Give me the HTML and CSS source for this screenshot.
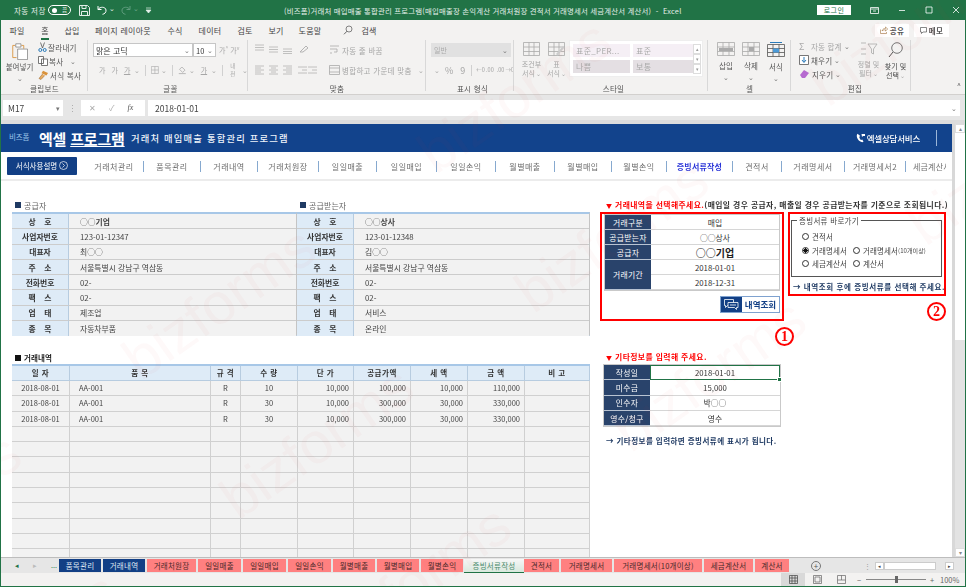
FILE: index.html
```html
<!DOCTYPE html>
<html lang="ko">
<head>
<meta charset="utf-8">
<title>엑셀 프로그램</title>
<link rel="stylesheet" href="styles.css">
</head>
<body>
<div class="app">
  <header class="titlebar">
    <div class="qa">
      <span class="qa-label">자동 저장</span>
      <span class="toggle"><i></i><b>끔</b></span>
      <svg class="qa-save" width="11" height="11" viewBox="0 0 11 11"><path d="M.5.5h8l2 2v8H.5zM3 .5v3h4v-3M2.500 10.500v-4h6v4" fill="none" stroke="#e3efe9"/></svg>
      <svg class="qa-undo" width="10" height="10" viewBox="0 0 10 10"><path d="M1 1v3.500h3.500M1.200 4.300C3 1.500 8.500 1.500 9 5c.3 2.500-1.500 4-3.500 4.300" fill="none" stroke="#fff"/></svg>
      <span class="qa-chev">⌄</span>
      <svg class="qa-redo" width="10" height="10" viewBox="0 0 10 10"><path d="M9 1v3.500H5.500M8.800 4.300C7 1.500 1.500 1.500 1 5c-.3 2.500 1.500 4 3.500 4.300" fill="none" stroke="#5f9d7e"/></svg>
      <span class="qa-chev dim">⌄</span>
      <svg class="qa-more" width="7" height="7" viewBox="0 0 7 7"><path d="M1 1h5M1 3l2.500 3L6 3z" fill="#e3efe9" stroke="#e3efe9" stroke-width=".7"/></svg>
    </div>
    <div class="doc-title">(비즈폼)거래처 매입매출 통합관리 프로그램(매입매출장 손익계산 거래처원장 견적서 거래명세서 세금계산서 계산서)&nbsp; - &nbsp;Excel</div>
    <div class="win">
      <span class="login">로그인</span>
      <svg width="9" height="7" viewBox="0 0 9 7"><path d="M.5.500h8v6h-8zM.5 2h8M3 4h3" fill="none" stroke="#fff" stroke-width=".8"/></svg>
      <svg width="8" height="8" viewBox="0 0 8 8"><path d="M1 4.500h6" stroke="#fff" stroke-width=".8"/></svg>
      <svg width="8" height="8" viewBox="0 0 8 8"><path d="M1 1h6v6H1z" fill="none" stroke="#fff" stroke-width=".8"/></svg>
      <svg width="8" height="8" viewBox="0 0 8 8"><path d="M1 1l6 6M7 1L1 7" stroke="#fff" stroke-width=".8"/></svg>
    </div>
  </header>

  <nav class="ribbon-tabs">
    <span class="rt rt-file">파일</span>
    <span class="rt rt-home">홈</span>
    <span class="rt rt-ins">삽입</span>
    <span class="rt rt-page">페이지 레이아웃</span>
    <span class="rt rt-form">수식</span>
    <span class="rt rt-data">데이터</span>
    <span class="rt rt-rev">검토</span>
    <span class="rt rt-view">보기</span>
    <span class="rt rt-help">도움말</span>
    <svg class="rt-search" width="10" height="10" viewBox="0 0 10 10"><circle cx="6" cy="4" r="3" fill="none" stroke="#666" stroke-width=".8"/><path d="M4 6.200L1 9.300" stroke="#666"/></svg>
    <span class="rt rt-find">검색</span>
    <span class="share"><svg width="8" height="8" viewBox="0 0 8 8"><path d="M.5 3.500v4h6V6M2 5c.5-2 2-2.500 3.500-2.500V1L7.700 3 5.500 5V3.800C4 3.800 3 4 2 5z" fill="none" stroke="#a0703a" stroke-width=".6"/></svg>공유</span>
    <span class="share memo"><svg width="7" height="7" viewBox="0 0 7 7"><path d="M.5.500h6v4.500H3L1.500 6.500V5h-1z" fill="none" stroke="#555" stroke-width=".7"/></svg>메모</span>
  </nav>

  <section class="ribbon">
    <div class="group g-clip">
      <div class="group-body">
        <div class="paste">
          <svg width="16" height="17" viewBox="0 0 17 21" preserveAspectRatio="none"><path d="M3.500 3H.8v15h4" fill="none" stroke="#d9923b"/><path d="M10 3h2.500v4" fill="none" stroke="#d9923b"/><path d="M4 1h5.500v4H4z" fill="#fff" stroke="#777" stroke-width=".8"/><path d="M6 7.500h10.500v13H6z" fill="#fff" stroke="#777" stroke-width=".8"/></svg>
          <span>붙여넣기</span>
          <em class="chev">⌄</em>
        </div>
        <div class="clip-list">
          <span><svg width="9" height="10" viewBox="0 0 9 10"><path d="M2.500.5l2 5.500M6.500.5l-2 5.500" stroke="#555" stroke-width=".8"/><circle cx="2.300" cy="8" r="1.500" fill="none" stroke="#2a7ab9"/><circle cx="6.700" cy="8" r="1.500" fill="none" stroke="#2a7ab9"/></svg>잘라내기</span>
          <span><svg width="10" height="10" viewBox="0 0 10 10"><path d="M.5.500h5v7h-5zM3.500 3h6v6.500h-6z" fill="#fff" stroke="#555" stroke-width=".8"/></svg>복사 <em class="chev gap">⌄</em></span>
          <span><svg width="11" height="10" viewBox="0 0 11 10"><path d="M5 .8l5 2.200-1.500 2.500-5-2.200z" fill="#d9923b"/><path d="M4.500 4L1 8.500l2 1 3.800-4" fill="#e8ad64" stroke="#8f5a20" stroke-width=".5"/></svg>서식 복사</span>
        </div>
      </div>
      <div class="group-label">클립보드</div>
    </div>

    <div class="group g-font">
      <div class="group-body stack">
        <div class="font-row">
          <span class="select sel-font">맑은 고딕<em class="chev">⌄</em></span>
          <span class="select sel-size">10<em class="chev">⌄</em></span>
          <span class="dim grow-font">가<sup>^</sup> 가<sup>v</sup></span>
        </div>
        <div class="font-row dim tools">
          <span>가</span><span>가</span><u>가</u><em class="chev">⌄</em><i class="sep"></i>
          <svg width="10" height="10" viewBox="0 0 10 10"><path d="M.5.500h9v9h-9zM5 .5v9M.5 5h9" fill="none" stroke="#aaa" stroke-width=".8"/></svg><em class="chev">⌄</em><i class="sep"></i>
          <svg width="11" height="11" viewBox="0 0 11 11"><path d="M5 1l4 4-3 3-4-4zM1 9.500h9" fill="none" stroke="#aaa"/></svg><em class="chev">⌄</em>
          <u class="gap-l">가</u><em class="chev">⌄</em><i class="sep"></i>
          <span class="tiny">내천</span><em class="chev">⌄</em>
        </div>
      </div>
      <div class="group-label">글꼴</div>
    </div>

    <div class="group g-align">
      <div class="group-body aligns">
        <div class="align-icons">
          <svg width="60" height="10" viewBox="0 0 60 10"><path d="M1 1h9M1 3.500h9M1 6h9M15 3h9M15 5.500h9M15 8h9M29 5h9M29 7.500h9M29 9.500h9" stroke="#b3b3b3" stroke-width=".8"/><path d="M46 8l6-6 2 2-5 4z" fill="none" stroke="#b3b3b3"/></svg>
          <svg width="66" height="10" viewBox="0 0 66 10"><path d="M1 1h9M1 3h6M1 5h9M1 7h6M1 9h9M15 1h9M17 3h5M15 5h9M17 7h5M15 9h9M29 1h9M32 3h6M29 5h9M32 7h6M29 9h9M44 2h9M48 5h5M44 8h9M54 2h9M58 5h5M54 8h9" stroke="#b3b3b3" stroke-width=".8"/></svg>
        </div>
        <div class="wrap-list dim">
          <span><svg width="11" height="10" viewBox="0 0 11 10"><path d="M1 1h9M1 4h7v3H5M1 8h2" fill="none" stroke="#aaa" stroke-width=".8"/></svg>자동 줄 바꿈</span>
          <span><svg width="11" height="10" viewBox="0 0 11 10"><path d="M.5.500h10v9H.5zM.5 3h10M.5 7h10" fill="none" stroke="#aaa" stroke-width=".8"/></svg>병합하고 가운데 맞춤 <em class="chev">⌄</em></span>
        </div>
      </div>
      <div class="group-label">맞춤</div>
    </div>

    <div class="group g-num">
      <div class="group-body stack">
        <span class="select sel-num">일반<em class="chev">⌄</em></span>
        <div class="num-row dim">
          <svg width="11" height="10" viewBox="0 0 11 10"><path d="M.5 1.500h10v7H.5zM4 1.500v7M7 1.500v7" fill="none" stroke="#aaa" stroke-width=".8"/></svg><em class="chev">⌄</em>
          <b>%</b><b>9</b><i class="sep"></i><span class="decs">←0 .00</span><span class="decs">.00 →0</span>
        </div>
      </div>
      <div class="group-label">표시 형식</div>
    </div>

    <div class="group g-style">
      <div class="group-body">
        <div class="ribbon-cmd dim wide">
          <svg width="17" height="14" viewBox="0 0 17 14"><path d="M.5.500h16v13H.5zM.5 5h16M.5 9.500h16M6 .5v13M11 .5v13" fill="none" stroke="#aaa" stroke-width=".8"/></svg>
          <span>조건부<br>서식<em class="chev">⌄</em></span>
        </div>
        <div class="ribbon-cmd dim wide">
          <svg width="17" height="14" viewBox="0 0 17 14"><path d="M.5.500h16v13H.5zM.5 5h16M.5 9.500h16M6 .5v13M11 .5v13" fill="none" stroke="#aaa" stroke-width=".8"/><path d="M8 12l7-8 1.500 1.500-7 8z" fill="#ccc"/></svg>
          <span>표<br>서식<em class="chev">⌄</em></span>
        </div>
        <div class="gallery">
          <div class="gallery-grid">
            <span class="sw sw-a">표준_PER...</span><span class="sw sw-a">표준</span>
            <span class="sw sw-b">나쁨</span><span class="sw sw-b">보통</span>
          </div>
          <div class="gallery-arrows"><i>▴</i><i>▾</i><i>▾</i></div>
        </div>
      </div>
      <div class="group-label">스타일</div>
    </div>

    <div class="group g-cell">
      <div class="group-body cells">
        <div class="cell-cmd">
          <svg width="18" height="14" viewBox="0 0 18 14"><path d="M.5.500h17v13H.5zM.5 5h17M.5 9.500h17M6 .5v13M12 .5v13" fill="none" stroke="#aaa" stroke-width=".8"/><path d="M2 6h14v3H2z" fill="#aaa"/></svg>
          <span>삽입</span><em class="chev">⌄</em>
        </div>
        <div class="cell-cmd">
          <svg width="18" height="14" viewBox="0 0 18 14"><path d="M.5.500h17v13H.5zM.5 5h17M.5 9.500h17M6 .5v13M12 .5v13" fill="none" stroke="#aaa" stroke-width=".8"/><path d="M7 5h5v4H7z" fill="#aaa"/></svg>
          <span>삭제</span><em class="chev">⌄</em>
        </div>
        <div class="cell-cmd">
          <svg width="18" height="15" viewBox="0 0 18 15"><path d="M.5 2.500h17v12H.5zM.5 6.500h17M.5 10.500h17M6 2.500v12M12 2.500v12" fill="none" stroke="#555" stroke-width=".8"/><path d="M6 6.500h6v4H6z" fill="#4a9ad8"/><path d="M3 .5h12" stroke="#2a7ab9"/></svg>
          <span>서식</span><em class="chev">⌄</em>
        </div>
      </div>
      <div class="group-label">셀</div>
    </div>

    <div class="group g-edit">
      <div class="group-body">
        <div class="edit-list">
          <span class="dim"><b class="sigma">Σ</b>자동 합계 <em class="chev">⌄</em></span>
          <span><svg width="10" height="10" viewBox="0 0 10 10"><path d="M.5.500h9v9h-9z" fill="#fff" stroke="#555" stroke-width=".8"/><path d="M5 2v5M3 5l2 2.500L7 5" fill="none" stroke="#2a7ab9"/></svg>채우기<em class="chev">⌄</em></span>
          <span><svg width="11" height="10" viewBox="0 0 11 10"><path d="M1 6l4-5 5 3-4 5H3z" fill="#b66ad0"/></svg>지우기<em class="chev">⌄</em></span>
        </div>
        <div class="ribbon-cmd dim filter">
          <svg width="18" height="14" viewBox="0 0 18 14"><path d="M1 1h5M1 7h5M1 12h5M8 2h9l-3.500 5v5l-2-1V7z" fill="none" stroke="#aaa" stroke-width=".8"/></svg>
          <span>정렬 및<br>필터<em class="chev">⌄</em></span>
        </div>
        <div class="ribbon-cmd filter">
          <svg width="15" height="16" viewBox="0 0 15 16"><circle cx="9" cy="6" r="5.300" fill="none" stroke="#555" stroke-width=".8"/><path d="M5 10l-4 5" stroke="#555"/></svg>
          <span class="find-tx">찾기 및<br>선택<em class="chev">⌄</em></span>
        </div>
      </div>
      <div class="group-label">편집</div>
    </div>
    <div class="collapse">^</div>
  </section>

  <section class="formula-bar">
    <div class="namebox">M17<em class="chev">▾</em></div>
    <div class="fb-dots">⋮</div>
    <div class="fb-btns"><span>✕</span><span>✓</span><i>fx</i></div>
    <div class="fb-input">2018-01-01<em class="chev">⌄</em></div>
  </section>

  <div class="sheet">
    <main class="sheet-main">
      <div class="banner">
        <span class="brand-sm">비즈폼</span>
        <span class="brand">엑셀 <u>프로그램</u></span>
        <span class="brand-sub">거래처 매입매출 통합관리 프로그램</span>
        <span class="call"><svg width="10" height="10" viewBox="0 0 10 10"><path d="M1.500.8C0 2.500 1 6 3.500 8c1.500 1.200 3 1.500 4 .8L6.300 6.500l-1.200.6C4 6.400 3.400 5 3.300 3.800L4.300 3z" fill="#fff"/><path d="M5.500 1h3.500v2H7L6 4z" fill="#fff"/></svg>엑셀상담서비스</span>
      </div>

      <div class="menu">
        <div class="help-btn">서식사용설명 <svg width="9" height="9" viewBox="0 0 9 9"><circle cx="4.500" cy="4.500" r="4" fill="none" stroke="#fff" stroke-width=".7"/><path d="M3.500 2.500l2 2-2 2" fill="none" stroke="#fff" stroke-width=".7"/></svg></div>
        <div class="menu-items">
          <span>거래처관리</span><span>품목관리</span><span>거래내역</span><span>거래처원장</span><span>일일매출</span><span>일일매입</span><span>일일손익</span><span>월별매출</span><span>월별매입</span><span>월별손익</span><span class="on">증빙서류작성</span><span>견적서</span><span>거래명세서</span><span>거래명세서2</span><span class="last">세금계산서</span>
        </div>
      </div>

      <div class="panels">
        <div class="upper">
          <div class="parties">
            <div class="party">
              <h3 class="sub-h"><i></i>공급자</h3>
              <div class="info">
                <b>상 &nbsp; &nbsp;호</b><span>○○<strong>기업</strong></span>
                <b>사업자번호</b><span>123-01-12347</span>
                <b>대표자</b><span>최○○</span>
                <b>주 &nbsp; &nbsp;소</b><span>서울특별시 강남구 역삼동</span>
                <b>전화번호</b><span>02-</span>
                <b>팩 &nbsp; &nbsp;스</b><span>02-</span>
                <b>업 &nbsp; &nbsp;태</b><span>제조업</span>
                <b>종 &nbsp; &nbsp;목</b><span>자동차부품</span>
              </div>
            </div>
            <div class="party party-b">
              <h3 class="sub-h"><i></i>공급받는자</h3>
              <div class="info">
                <b>상 &nbsp; &nbsp;호</b><span>○○<strong>상사</strong></span>
                <b>사업자번호</b><span>123-01-12348</span>
                <b>대표자</b><span>김○○</span>
                <b>주 &nbsp; &nbsp;소</b><span>서울특별시 강남구 역삼동</span>
                <b>전화번호</b><span>02-</span>
                <b>팩 &nbsp; &nbsp;스</b><span>02-</span>
                <b>업 &nbsp; &nbsp;태</b><span>서비스</span>
                <b>종 &nbsp; &nbsp;목</b><span>온라인</span>
              </div>
            </div>
          </div>

          <div class="pick">
            <p class="notice"><em><i class="tri">▼</i> 거래내역을 선택해주세요.</em>(매입일 경우 공급자, 매출일 경우 공급받는자를 기준으로 조회됩니다.)</p>
            <div class="pick-boxes">
              <div class="red-box box-a">
                <div class="form-grid">
                  <b>거래구분</b><span>매입</span>
                  <b>공급받는자</b><span>○○상사</span>
                  <b>공급자</b><span class="big">○○기업</span>
                  <b class="span2">거래기간</b><span>2018-01-01</span><span>2018-12-31</span>
                </div>
                <div class="query-wrap">
                  <div class="query">
                    <span class="query-ic"><svg width="15" height="11" viewBox="0 0 15 11"><path d="M.5.500h9v6h-6l-2 2v-2h-1z" fill="none" stroke="#fff" stroke-width=".8"/><path d="M4 3.500h10v5h-1.500v2l-2-2H4z" fill="#123f85" stroke="#fff" stroke-width=".8"/><path d="M6 6h6" stroke="#fff" stroke-width=".8"/></svg></span>
                    <span class="query-tx">내역조회</span>
                  </div>
                </div>
                <span class="num-badge badge-a">1</span>
              </div>
              <div class="red-box box-b">
                <fieldset class="docs">
                  <legend>증빙서류 바로가기</legend>
                  <div class="radios">
                    <span><i class="radio"></i>견적서</span><span></span>
                    <span><i class="radio checked"></i>거래명세서</span><span><i class="radio"></i>거래명세서<small>(10개이상)</small></span>
                    <span><i class="radio"></i>세금계산서</span><span><i class="radio"></i>계산서</span>
                  </div>
                </fieldset>
                <p class="hint box-hint">→ 내역조회 후에 증빙서류를 선택해 주세요.</p>
                <span class="num-badge badge-b">2</span>
              </div>
            </div>
          </div>
        </div>

        <div class="lower">
          <div class="ledger-wrap">
            <h3 class="sub-h dark"><i></i>거래내역</h3>
            <div class="ledger">
              <div class="lrow lhead"><b>일 자</b><b>품 목</b><b>규 격</b><b>수 량</b><b>단 가</b><b>공급가액</b><b>세 액</b><b>금 액</b><b>비 고</b></div>
              <div class="lrow"><span>2018-08-01</span><span class="l">AA-001</span><span>R</span><span>10</span><span class="r">10,000</span><span class="r">100,000</span><span class="r">10,000</span><span class="r">110,000</span><span></span></div>
              <div class="lrow"><span>2018-08-01</span><span class="l">AA-001</span><span>R</span><span>30</span><span class="r">10,000</span><span class="r">300,000</span><span class="r">30,000</span><span class="r">330,000</span><span></span></div>
              <div class="lrow"><span>2018-08-01</span><span class="l">AA-001</span><span>R</span><span>30</span><span class="r">10,000</span><span class="r">300,000</span><span class="r">30,000</span><span class="r">330,000</span><span></span></div>
              <div class="lrow"><span></span><span></span><span></span><span></span><span></span><span></span><span></span><span></span><span></span></div>
              <div class="lrow"><span></span><span></span><span></span><span></span><span></span><span></span><span></span><span></span><span></span></div>
              <div class="lrow"><span></span><span></span><span></span><span></span><span></span><span></span><span></span><span></span><span></span></div>
              <div class="lrow"><span></span><span></span><span></span><span></span><span></span><span></span><span></span><span></span><span></span></div>
              <div class="lrow"><span></span><span></span><span></span><span></span><span></span><span></span><span></span><span></span><span></span></div>
              <div class="lrow"><span></span><span></span><span></span><span></span><span></span><span></span><span></span><span></span><span></span></div>
              <div class="lrow"><span></span><span></span><span></span><span></span><span></span><span></span><span></span><span></span><span></span></div>
              <div class="lrow"><span></span><span></span><span></span><span></span><span></span><span></span><span></span><span></span><span></span></div>
              <div class="lrow"><span></span><span></span><span></span><span></span><span></span><span></span><span></span><span></span><span></span></div>
            </div>
          </div>
          <div class="etc">
            <p class="notice red-only"><em><i class="tri">▼</i> 기타정보를 입력해 주세요.</em></p>
            <div class="form-grid etc-grid">
              <b>작성일</b><span class="selected">2018-01-01</span>
              <b>미수금</b><span>15,000</span>
              <b>인수자</b><span>박○○</span>
              <b>영수/청구</b><span>영수</span>
            </div>
            <p class="hint etc-hint">→ 기타정보를 입력하면 증빙서류에 표시가 됩니다.</p>
          </div>
        </div>
      </div>
    </main>
    <aside class="vscroll">
      <span class="sb-arrow">▴</span>
      <span class="sb-thumb"></span>
      <span class="sb-track"></span>
      <span class="sb-arrow">▾</span>
    </aside>
  </div>

  <div class="tabstrip">
    <div class="tab-nav"><span>◂</span><span class="faint">▸</span><span>...</span></div>
    <span class="tab navy t42">품목관리</span>
    <span class="tab navy t42">거래내역</span>
    <span class="tab pink t50">거래처원장</span>
    <span class="tab pink t43">일일매출</span>
    <span class="tab pink t43">일일매입</span>
    <span class="tab pink t43">일일손익</span>
    <span class="tab pink t42">월별매출</span>
    <span class="tab pink t42">월별매입</span>
    <span class="tab pink t42">월별손익</span>
    <span class="tab active">증빙서류작성</span>
    <span class="tab pink t36">견적서</span>
    <span class="tab pink t52">거래명세서</span>
    <span class="tab pink t88">거래명세서(10개이상)</span>
    <span class="tab pink t50">세금계산서</span>
    <span class="tab pink t35">계산서</span>
    <span class="tab-add">+</span>
    <div class="hscroll"><span class="dots">⋮</span><span class="hs-b">◂</span><span class="hs-t"></span><span class="hs-b">▸</span></div>
  </div>

  <footer class="status">
    <span class="view on"><svg width="9" height="9" viewBox="0 0 9 9"><path d="M.5.500h8v8h-8zM.5 3h8M.5 6h8M3 .5v8M6 .5v8" fill="none" stroke="#444" stroke-width=".7"/></svg></span>
    <span class="view"><svg width="9" height="9" viewBox="0 0 9 9"><path d="M.5.500h8v8h-8zM2 2h5v5H2z" fill="none" stroke="#666" stroke-width=".7"/></svg></span>
    <span class="view"><svg width="9" height="9" viewBox="0 0 9 9"><path d="M.5.500h8v8h-8zM.5 5h8M4.500.5V5" fill="none" stroke="#666" stroke-width=".7"/></svg></span>
    <span class="zoom-minus">−</span>
    <span class="zoom-track"><i></i></span>
    <span class="zoom-plus">+</span>
    <span class="zoom-val">100%</span>
  </footer>

  <div class="watermark" aria-hidden="true">
    <div class="wm-sheet">
      <span>bizforms</span><span>bizforms</span><span>bizforms</span><span>bizforms</span><span>bizforms</span><span>bizforms</span><span>bizforms</span><span>bizforms</span><span>bizforms</span><span>bizforms</span><span>bizforms</span><span>bizforms</span>
    </div>
  </div>
</div>
</body>
</html>
```
FILE: styles.css
```css
* { box-sizing: border-box; }
html, body { margin: 0; padding: 0; width: 966px; height: 587px; overflow: hidden; }
body { font-family: "Noto Sans CJK KR", "Noto Sans", sans-serif; font-size: 8px; color: #333; background: #fff; }
em { font-style: normal; }
h3, p, fieldset { margin: 0; padding: 0; }

.app { position: relative; width: 966px; height: 587px; display: flex; flex-direction: column; border-left: 1px solid #217346; border-right: 1px solid #217346; border-bottom: 1px solid #217346; overflow: hidden; filter: blur(.3px); }

.chev { color: #777; font-size: 7px; line-height: 6px; }
.dim { color: #a6a6a6; }

/* title bar */
.titlebar { height: 20px; flex: none; background: #217346; color: #e6f0eb; display: flex; align-items: center; font-size: 7.5px; }
.qa { width: 283px; flex: none; display: flex; align-items: center; padding-left: 13px; }
.qa-label { letter-spacing: .4px; width: 34px; }
.toggle { width: 23px; height: 10px; border: 1px solid #fff; border-radius: 5px; display: flex; align-items: center; justify-content: space-between; padding: 0 3px 0 3px; font-size: 5.500px; }
.toggle i { width: 5px; height: 5px; border-radius: 50%; background: #fff; }
.toggle b { font-weight: 400; }
.qa-save { margin-left: 8px; }
.qa-undo { margin-left: 7px; }
.qa-chev { margin: -4px 0 0 2px; font-size: 7px; width: 9px; }
.qa-chev.dim { color: #6da88b; }
.qa-redo { margin-left: 3px; }
.qa-more { margin-left: 3px; }
.doc-title { width: 400px; flex: none; font-size: 7.4px; white-space: nowrap; overflow: hidden; letter-spacing: .2px; }
.win { flex: 1; display: flex; align-items: center; justify-content: flex-start; padding-left: 133px; gap: 19px; }
.login { background: #fff; color: #217346; width: 34px; height: 10px; line-height: 10px; text-align: center; font-size: 7px; letter-spacing: .4px; }

/* ribbon tabs */
.ribbon-tabs { height: 18px; flex: none; background: #f3f2f1; display: flex; align-items: center; padding-top: 2px; font-size: 8px; color: #444; letter-spacing: .25px; }
.rt { flex: none; text-align: center; }
.rt-file { width: 30px; margin-left: 1px; }
.rt-home { width: 26px; position: relative; }
.rt-home::after { content: ""; position: absolute; left: 9px; right: 9px; bottom: -4px; height: 1.500px; background: #217346; }
.rt-ins { width: 28px; }
.rt-page { width: 74px; }
.rt-form { width: 30px; }
.rt-data { width: 40px; }
.rt-rev { width: 30px; }
.rt-view { width: 32px; }
.rt-help { width: 36px; }
.rt-search { margin-left: 15px; flex: none; }
.rt-find { width: 30px; margin-left: 1px; }
.share { flex: none; margin-left: 491px; width: 34px; height: 13px; background: #fff; display: flex; align-items: center; justify-content: center; gap: 2px; font-size: 7.500px; font-weight: 700; color: #555; letter-spacing: .4px; }
.share.memo { margin-left: 5px; width: 35px; }

/* ribbon */
.ribbon { height: 57px; flex: none; background: #f3f2f1; display: flex; border-bottom: 1px solid #d2d0ce; font-size: 7.500px; color: #555; }
.group { flex: none; display: flex; flex-direction: column; position: relative; }
.group::after { content: ""; position: absolute; right: 0; top: 2px; bottom: 3px; width: 1px; background: #d8d8d8; }
.group-body { height: 46px; display: flex; flex: none; }
.group-label { flex: 1; text-align: center; font-size: 7.500px; letter-spacing: .3px; line-height: 10px; color: #555; }
.stack { flex-direction: column; }
.sep { width: 1px; height: 11px; background: #d0d0d0; margin: 0 3px; display: inline-block; flex: none; }

.g-clip { width: 87px; }
.paste { width: 37px; padding-top: 5px; display: flex; flex-direction: column; align-items: center; }
.paste span { font-size: 7.500px; line-height: 12px; white-space: nowrap; margin-top: 1px; }
.paste .chev { margin-top: 2px; }
.clip-list { flex: 1; display: flex; flex-direction: column; padding-top: 4px; gap: 4px; }
.clip-list span { display: flex; align-items: center; gap: 1px; height: 10px; white-space: nowrap; letter-spacing: .3px; }
.chev.gap { margin-left: 6px; }

.g-font { width: 160px; padding-left: 5px; }
.font-row { display: flex; align-items: center; }
.g-font .font-row:first-child { margin-top: 5px; height: 14px; }
.select { background: #fff; border: 1px solid #c6c6c6; height: 14px; display: flex; align-items: center; justify-content: space-between; padding: 0 2px 0 2px; font-size: 7.500px; color: #333; }
.sel-font { width: 100px; font-size: 8px; }
.sel-size { width: 23px; }
.grow-font { margin-left: 3px; font-size: 7px; }
.grow-font sup { font-size: 5px; line-height: 0; }
.tools { margin-top: 6px; padding-left: 4px; height: 14px; gap: 2px; font-size: 7px; }
.tools span, .tools u { margin: 0 2px; }
.tools .chev { color: #aaa; }
.tools .gap-l { margin-left: 4px; }
.tools .tiny { font-size: 5.500px; }

.g-align { width: 178px; }
.aligns { padding: 5px 0 0 6px; }
.align-icons { width: 75px; display: flex; flex-direction: column; gap: 11px; padding-top: 1px; }
.wrap-list { flex: 1; display: flex; flex-direction: column; gap: 8px; padding-top: 1px; }
.wrap-list span { display: flex; align-items: center; gap: 2px; height: 12px; white-space: nowrap; letter-spacing: .3px; }
.wrap-list .chev { margin-left: 4px; color: #aaa; }

.g-num { width: 88px; padding-left: 5px; }
.sel-num { width: 80px; margin-top: 5px; background: #e1e1e1; border-color: #e1e1e1; color: #aaa; font-size: 7px; flex: none; }
.num-row { display: flex; align-items: center; gap: 3px; margin-top: 6px; height: 14px; }
.num-row b { font-size: 9px; font-weight: 400; margin: 0 2px; }
.num-row .chev { color: #aaa; }
.decs { font-size: 5.500px; white-space: nowrap; }
.num-row .sep { margin: 0 1px; }

.g-style { width: 194px; padding-left: 5px; }
.ribbon-cmd { width: 25px; display: flex; flex-direction: column; align-items: center; padding-top: 4px; font-size: 7px; line-height: 9px; text-align: center; }
.ribbon-cmd span { margin-top: 4px; white-space: nowrap; }
.ribbon-cmd .chev { color: #aaa; font-size: 6px; margin-left: 1px; }
.find-tx { color: #444; }
.gallery { width: 134px; height: 37px; margin: 2px 0 0 0; background: #fff; display: flex; padding: 3px 1px 3px 3px; border: 1px solid #eee; }
.gallery-grid { flex: 1; display: grid; grid-template-columns: 57px 60px; grid-auto-rows: 13px; gap: 3px 3px; }
.sw { font-size: 8px; line-height: 13px; padding-left: 3px; color: #aaa; white-space: nowrap; letter-spacing: .3px; }
.sw-a { background: #f5eff5; }
.sw-b { background: #e4dfe3; }
.gallery-arrows { width: 9px; display: flex; flex-direction: column; font-size: 5px; }
.gallery-arrows i { flex: 1; border: 1px solid #ddd; text-align: center; font-style: normal; color: #999; line-height: 8px; }

.g-cell { width: 83px; }
.cells { padding-left: 9px; gap: 7px; }
.cell-cmd { width: 18px; display: flex; flex-direction: column; align-items: center; padding-top: 4px; line-height: 10px; }
.cell-cmd span { margin-top: 5px; white-space: nowrap; }
.cell-cmd .chev { margin-top: 3px; }

.g-edit { width: 120px; padding-left: 8px; }
.edit-list { width: 56px; display: flex; flex-direction: column; padding-top: 3px; gap: 4px; flex: none; }
.edit-list span { display: flex; align-items: center; gap: 2px; height: 10px; white-space: nowrap; letter-spacing: .2px; }
.sigma { font-weight: 400; font-size: 9px; width: 10px; color: #aaa; }
.filter { width: 27px; }
.collapse { flex: 1; text-align: right; padding: 42px 4px 0 0; font-size: 7px; line-height: 10px; color: #555; }

/* formula bar */
.formula-bar { height: 25px; flex: none; background: #e6e6e6; display: flex; align-items: center; padding: 0 5px 0 2px; font-size: 8.500px; color: #444; }
.namebox { width: 60px; height: 16px; background: #fff; padding: 0 3px 0 5px; display: flex; justify-content: space-between; align-items: center; }
.fb-dots { width: 18px; text-align: center; color: #aaa; }
.fb-btns { width: 64px; height: 16px; background: #fff; display: flex; align-items: center; gap: 13px; padding-left: 8px; color: #aaa; font-size: 8px; }
.fb-btns i { color: #555; font-family: "Liberation Serif", serif; }
.fb-input { flex: 1; height: 16px; background: #fff; margin-left: 3px; padding: 0 3px 0 7px; display: flex; justify-content: space-between; align-items: center; }

/* sheet */
.sheet { flex: none; height: 437px; display: flex; overflow: hidden; border-top: 4px solid #dcdcdc; }
.sheet-main { width: 951px; flex: none; display: flex; flex-direction: column; }
.banner { height: 28px; flex: none; background: #12438c; color: #fff; display: flex; align-items: center; }
.brand-sm { margin-left: 8px; width: 30px; font-size: 7.500px; color: #9cc3e8; letter-spacing: -.2px; margin-top: -3px; }
.brand { width: 92px; font-size: 15px; font-weight: 700; letter-spacing: -.2px; white-space: nowrap; }
.brand u { text-underline-offset: 1px; text-decoration-thickness: 1px; }
.brand-sub { font-size: 9.300px; font-weight: 500; letter-spacing: 1.2px; white-space: nowrap; color: #eef3fa; }
.call { margin-left: auto; margin-right: 15px; padding-right: 16px; border-right: 1px solid #9bb6d8; height: 16px; display: flex; align-items: center; gap: 1px; font-size: 8.500px; font-weight: 500; letter-spacing: -.2px; }

.menu { height: 29px; flex: none; display: flex; align-items: center; border-bottom: 2px solid #ececec; padding-left: 6px; }
.help-btn { width: 70px; height: 18px; flex: none; background: #123f85; color: #fff; border-radius: 1px; font-size: 7.500px; display: flex; align-items: center; justify-content: center; gap: 2px; white-space: nowrap; }
.menu-items { margin: 1px 0 0 8px; flex: 1; display: grid; grid-template-columns: 59px 57px 57px 61px 58px 60px 59px 59px 57px 55px 66px 49px 63px 61px 40px; }
.menu-items span { height: 11px; line-height: 11px; text-align: center; border-right: 1px solid #86a9cf; color: #6d6d6d; font-size: 8px; white-space: nowrap; letter-spacing: .5px; overflow: hidden; }
.menu-items .on { color: #2a35d8; font-weight: 700; letter-spacing: .2px; }
.menu-items .last { border-right: 0; text-align: left; padding-left: 7px; letter-spacing: .2px; }

.panels { flex: 1; overflow: hidden; padding-top: 17px; padding-left: 11px; }
.upper { height: 153px; display: flex; }
.parties { width: 578px; flex: none; display: flex; }
.party { width: 285px; flex: none; }
.party-b { width: 293px; }
.sub-h { height: 14px; font-size: 8px; font-weight: 400; color: #666; padding-left: 3px; display: flex; align-items: center; gap: 3px; letter-spacing: .1px; }
.sub-h i { width: 6px; height: 6px; background: #1f3a63; flex: none; }
.info { display: grid; grid-template-columns: 57px 1fr; grid-auto-rows: 15.300px; border-top: 2px solid #a7c7e7; border-bottom: 1px solid #bdd7ee; border-right: 1px solid #c4c4c4; height: 124px; }
.info > * { border-bottom: 1px solid #cccccc; display: flex; align-items: center; font-size: 7.800px; white-space: nowrap; }
.info > b { background: #deebf7; justify-content: center; border-right: 1px solid #b7cce0; font-weight: 700; color: #333; }
.info > span { background: #f2f2f2; padding-left: 11px; color: #444; }
.info strong { font-weight: 700; }
.info > :nth-last-child(-n+2) { border-bottom: 0; }

.pick { margin-left: 10px; width: 346px; flex: none; }
.notice { height: 14px; line-height: 14px; padding-left: 6px; font-size: 7.800px; font-weight: 700; color: #333; white-space: nowrap; letter-spacing: .43px; }
.notice em { color: #f00; }
.tri { font-style: normal; font-size: 6px; }
.pick-boxes { display: flex; gap: 4px; align-items: flex-start; }
.red-box { border: 2px solid #f00; position: relative; }
.box-a { width: 184px; height: 109px; padding: 0 2px; }
.box-b { width: 158px; height: 84px; padding: 3px 2px 0 1px; }
.form-grid { display: grid; grid-template-columns: 46px 1fr; grid-auto-rows: 15px; background: #fff; border: 1px solid #c9c9c9; font-size: 7.800px; }
.form-grid > * { display: flex; align-items: center; justify-content: center; border-bottom: 1px solid #d6d6d6; white-space: nowrap; }
.form-grid > b { background: #29436b; color: #fff; font-weight: 400; border-bottom: 1px solid #b8c3d2; letter-spacing: .3px; }
.form-grid > span { color: #333; }
.form-grid .big { font-weight: 700; font-size: 10px; color: #222; }
.form-grid .span2 { grid-row: span 2; }
.query-wrap { display: flex; justify-content: flex-end; padding-top: 5px; }
.query { width: 60px; height: 17px; display: flex; border: 1px solid #7fa2cf; background: #fff; }
.query-ic { width: 21px; background: #123f85; display: flex; align-items: center; justify-content: center; }
.query-tx { flex: 1; text-align: center; line-height: 15px; font-size: 8.500px; font-weight: 700; color: #123f85; }
.num-badge { position: absolute; width: 19px; height: 19px; border: 2px solid #f00; border-radius: 50%; color: #f00; font-family: "Liberation Serif", serif; font-size: 14px; font-weight: 700; line-height: 15px; text-align: center; background: #fff; }
.badge-a { left: 173px; bottom: -27px; }
.badge-b { left: 137px; bottom: -27px; }
.docs { border: 1px solid #555; height: 60px; width: 151px; padding: 0 0 0 10px; }
.docs legend { font-size: 7.500px; padding: 0 2px; margin-left: -5px; line-height: 7px; color: #444; letter-spacing: .3px; }
.radios { display: grid; grid-template-columns: 51px 1fr; grid-auto-rows: 13.500px; padding-top: 6px; font-size: 7.500px; color: #444; white-space: nowrap; }
.radios span { display: flex; align-items: center; letter-spacing: .1px; }
.radios small { font-size: 6px; }
.radio { width: 7px; height: 7px; border: 1px solid #333; border-radius: 50%; margin-right: 3px; flex: none; background: #fff; display: block; }
.radio.checked { background: radial-gradient(circle, #111 0 2px, #fff 2.200px); }
.hint { font-size: 7.500px; font-weight: 700; color: #1f3a63; white-space: nowrap; letter-spacing: .6px; }
.box-hint { margin-top: 5px; padding-left: 2px; line-height: 10px; }

.lower { display: flex; height: 300px; }
.ledger-wrap { width: 578px; flex: none; }
.sub-h.dark { color: #222; font-weight: 700; height: 13px; font-size: 7.500px; }
.sub-h.dark i { background: #111; }
.ledger { border-top: 2px solid #a7c7e7; }
.lrow { display: grid; grid-template-columns: 58px 141px 30px 57px 56px 57px 57px 57px 65px; height: 15.300px; }
.lrow > * { border-right: 1px solid #d0d0d0; border-bottom: 1px solid #d0d0d0; background: #f2f2f2; text-align: center; font-size: 7.500px; line-height: 14px; color: #444; overflow: hidden; white-space: nowrap; }
.lrow .l { text-align: left; padding-left: 9px; }
.lrow .r { text-align: right; padding-right: 4px; }
.lhead { height: 15px; }
.lhead > * { background: #deebf7; font-weight: 700; color: #333; border-right-color: #b7cce0; border-bottom-color: #b7cce0; letter-spacing: .5px; }
.etc { margin-left: 10px; flex: none; width: 346px; margin-top: -1px; }
.etc-grid { width: 178px; margin-left: 3px; grid-auto-rows: 15.300px; height: 63px; }
.selected { border: 1px solid #217346 !important; outline: 1px solid #217346; outline-offset: -1px; position: relative; }
.selected::after { content: ""; position: absolute; right: -3px; bottom: -3px; width: 3px; height: 3px; background: #217346; box-sizing: content-box; border: 1px solid #fff; }
.etc-hint { margin-top: 8px; padding-left: 6px; letter-spacing: .45px; }

.vscroll { flex: 1; border-left: 3px solid #d8d8d8; background: #e3e3e3; display: flex; flex-direction: column; align-items: stretch; }
.sb-arrow { height: 9px; flex: none; background: #fff; font-size: 6px; line-height: 7px; color: #888; text-align: center; border: 1px solid #ddd; }
.sb-thumb { height: 207px; background: #fff; flex: none; }
.sb-track { flex: 1; }

/* tabs */
.tabstrip { height: 16px; flex: none; background: #e6e6e6; border-top: 1px solid #bdbdbd; display: flex; align-items: flex-start; padding-top: 1px; }
.tab-nav { width: 58px; flex: none; display: flex; font-size: 7px; color: #217346; padding-left: 14px; line-height: 13px; gap: 14px; }
.tab-nav .faint { color: #bbb; }
.tab { flex: none; height: 13px; line-height: 13px; text-align: center; font-size: 7.500px; margin-right: 2px; letter-spacing: .25px; white-space: nowrap; }
.tab.navy { background: #123f85; color: #dfe8f4; }
.tab.pink { background: #ff8080; color: #4a2a2a; }
.t35 { width: 34px; } .t36 { width: 35px; } .t42 { width: 42px; } .t43 { width: 43px; } .t50 { width: 49px; } .t52 { width: 51px; } .t88 { width: 88px; }
.tab.active { width: 60px; height: 14px; background: linear-gradient(#f7f7f7, #d9e8dd); color: #4b8b6c; border-bottom: 1px solid #217346; margin-right: 0; margin-left: -1px; }
.tab-add { flex: none; width: 10px; height: 10px; border: 1px solid #777; border-radius: 50%; font-size: 8px; line-height: 8px; text-align: center; color: #555; margin: 2px 0 0 20px; }
.hscroll { flex: none; margin: 0 0 0 43px; display: flex; align-items: center; height: 13px; }
.dots { color: #999; width: 11px; font-size: 7px; }
.hs-b { width: 9px; height: 8px; background: #fff; border: 1px solid #ccc; font-size: 5px; line-height: 6px; text-align: center; color: #444; }
.hs-t { width: 52px; height: 8px; background: #fff; border: 1px solid #ccc; margin-right: 9px; }

/* status */
.status { flex: 1; background: #f3f2f1; display: flex; align-items: center; padding-left: 780px; font-size: 7.500px; color: #666; }
.view { width: 24px; height: 100%; display: flex; align-items: center; justify-content: center; flex: none; }
.view.on { background: #d9d9d9; }
.zoom-minus { margin-left: 4px; width: 8px; flex: none; }
.zoom-track { width: 60px; height: 1px; background: #888; position: relative; flex: none; margin-left: 1px; }
.zoom-track i { position: absolute; left: 29px; top: -3px; width: 3px; height: 7px; background: #666; }
.zoom-plus { width: 8px; margin-left: 2px; flex: none; text-align: center; }
.zoom-val { margin-left: 4px; flex: none; }

/* watermark */
.watermark { position: absolute; inset: 0; overflow: hidden; pointer-events: none; }
.wm-sheet { position: absolute; left: -200px; top: -260px; width: 1500px; height: 1200px; transform: rotate(-35deg); display: grid; grid-template-columns: repeat(4, 360px); grid-auto-rows: 170px; align-content: center; justify-content: center; }
.wm-sheet span { font-family: "Liberation Sans", sans-serif; font-size: 58px; color: rgba(235, 70, 50, .03); white-space: nowrap; }
```
